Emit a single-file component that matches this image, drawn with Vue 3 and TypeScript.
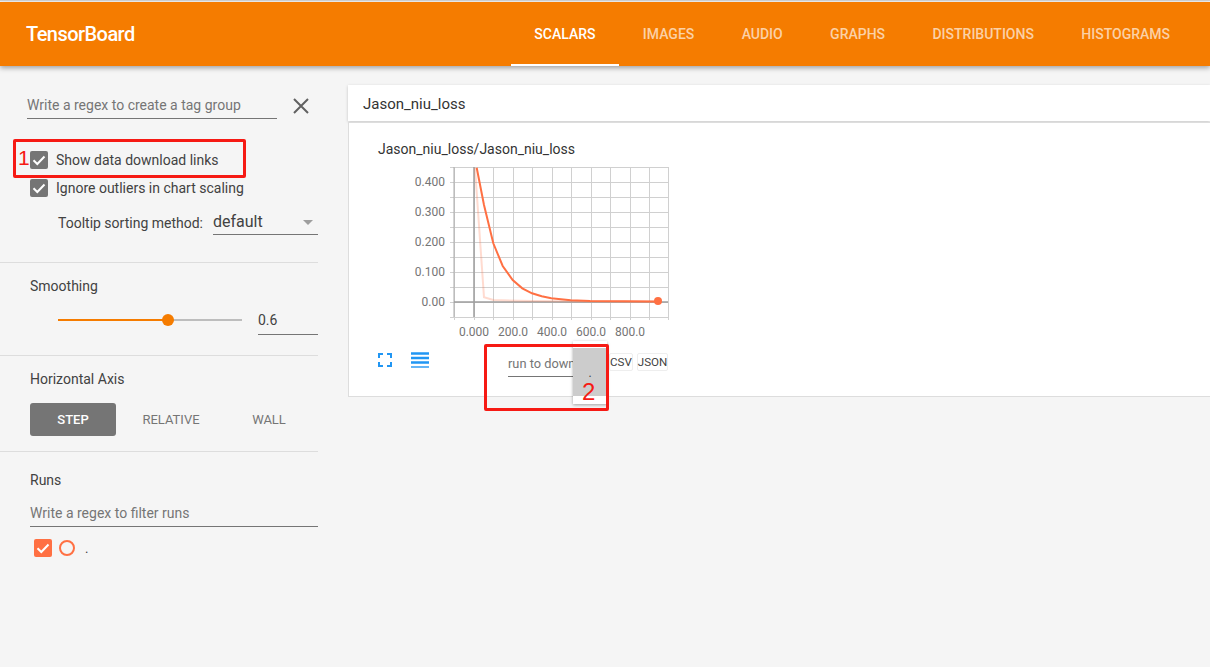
<script setup lang="ts">
const tabs = ['SCALARS', 'IMAGES', 'AUDIO', 'GRAPHS', 'DISTRIBUTIONS', 'HISTOGRAMS']
const vGrid = [454, 474, 493.5, 513, 532.5, 552, 571.5, 591, 610.5, 630, 649.5, 668]
const hGrid = [167, 182, 197, 212, 227, 242, 257, 272, 287, 302, 317]
const yLabels = [
  { t: '0.400', y: 182 },
  { t: '0.300', y: 212 },
  { t: '0.200', y: 242 },
  { t: '0.100', y: 272 },
  { t: '0.00', y: 302 },
]
const xLabels = [
  { t: '0.000', x: 474 },
  { t: '200.0', x: 513 },
  { t: '400.0', x: 552 },
  { t: '600.0', x: 591 },
  { t: '800.0', x: 630 },
]
</script>

<template>
  <div class="page">
    <header class="topbar">
      <div class="brand">TensorBoard</div>
      <nav class="tabs">
        <span v-for="(t, i) in tabs" :key="t" class="tab" :class="{ active: i === 0 }">{{ t }}</span>
      </nav>
    </header>

    <div class="body">
      <aside class="side">
        <section class="sec-top">
          <div class="group-row">
            <div class="regex">Write a regex to create a tag group</div>
            <svg class="close" viewBox="0 0 16 16" width="16" height="16"><path d="M1 1L15 15M15 1L1 15" stroke="#616161" stroke-width="2" fill="none" /></svg>
          </div>
          <label class="check first">
            <span class="box"><svg viewBox="0 0 18 18" width="18" height="18"><path d="M3.5 9.2L7.3 13L14.5 5.5" stroke="#fff" stroke-width="2" fill="none" /></svg></span>
            Show data download links
          </label>
          <label class="check second">
            <span class="box"><svg viewBox="0 0 18 18" width="18" height="18"><path d="M3.5 9.2L7.3 13L14.5 5.5" stroke="#fff" stroke-width="2" fill="none" /></svg></span>
            Ignore outliers in chart scaling
          </label>
          <div class="sort">
            <span class="sort-label">Tooltip sorting method:</span>
            <div class="select"><span>default</span><i class="caret"></i></div>
          </div>
        </section>

        <section class="sec smoothing">
          <div class="title">Smoothing</div>
          <div class="slider-row">
            <div class="track">
              <div class="fill" style="width: 60%"></div>
              <div class="thumb"></div>
            </div>
            <div class="value">0.6</div>
          </div>
        </section>

        <section class="sec axis">
          <div class="title">Horizontal Axis</div>
          <div class="btns">
            <span class="btn on">STEP</span>
            <span class="btn rel">RELATIVE</span>
            <span class="btn wall">WALL</span>
          </div>
        </section>

        <section class="sec runs">
          <div class="title">Runs</div>
          <div class="filter">Write a regex to filter runs</div>
          <div class="run">
            <span class="box orange"><svg viewBox="0 0 18 18" width="18" height="18"><path d="M3.5 9.2L7.3 13L14.5 5.5" stroke="#fff" stroke-width="2" fill="none" /></svg></span>
            <span class="radio"></span>
            <span class="dot">.</span>
          </div>
        </section>
      </aside>

      <main class="main">
        <div class="cat">Jason_niu_loss</div>
        <div class="card">
          <div class="card-title">Jason_niu_loss/Jason_niu_loss</div>
          <div class="chart">
            <svg viewBox="349 160 330 180" width="330" height="180">
              <g stroke="#d0d0d0" stroke-width="1" shape-rendering="crispEdges">
                <line v-for="x in vGrid" :key="x" :x1="x" :x2="x" y1="167" y2="320" />
                <line v-for="y in hGrid" :key="y" x1="450" x2="668" :y1="y" :y2="y" />
              </g>
              <line x1="454" x2="454" y1="167" y2="317" stroke="#aaa" />
              <line x1="474" x2="474" y1="167" y2="317" stroke="#9e9e9e" stroke-width="1.5" />
              <line x1="454" x2="668" y1="302" y2="302" stroke="#9e9e9e" stroke-width="1.5" />
              <path d="M475 167.7L484 297.3L493.3 300L532 301L658 301.7" fill="none" stroke="#ff7043" stroke-opacity="0.25" stroke-width="2" />
              <path d="M476.7 167.7L484 205L493.3 243.3L502.7 266L512.7 280L522.3 288.3L532 293.3L541.7 296.3L551.3 298.3L570.7 300.3L590 301L658 301.5" fill="none" stroke="#ff7043" stroke-width="2" />
              <circle cx="658" cy="301" r="4" fill="#ff7043" />
              <text v-for="l in yLabels" :key="l.t" x="445" :y="l.y + 4" text-anchor="end" class="tick">{{ l.t }}</text>
              <text v-for="l in xLabels" :key="l.t" :x="l.x" y="335.5" text-anchor="middle" class="tick">{{ l.t }}</text>
            </svg>
          </div>
          <div class="tools">
            <svg class="expand" viewBox="0 0 14 14" width="14" height="14"><path d="M1 5V1H5M9 1H13V5M13 9V13H9M5 13H1V9" fill="none" stroke="#2196f3" stroke-width="2" /></svg>
            <svg class="list" viewBox="0 0 18 16" width="18" height="16"><path d="M0 1.5H18M0 6H18M0 10.5H18" stroke="#2196f3" stroke-width="2.4" /><path d="M0 15H18" stroke="#2196f3" stroke-width="1.4" /></svg>
            <div class="download">
              <div class="run-input">run to download</div>
              <div class="menu"><div class="menu-item">.</div></div>
              <span class="fmt csv">CSV</span>
              <span class="fmt">JSON</span>
            </div>
          </div>
        </div>
      </main>
    </div>

    <div class="mark mark-one"></div>
    <div class="num num-one">1</div>
    <div class="mark mark-two"></div>
    <div class="num num-two">2</div>
  </div>
</template>

<style>
html, body { margin: 0; background: #f5f5f5; }
</style>

<style scoped>
.page {
  position: relative;
  width: 1210px;
  height: 667px;
  overflow: hidden;
  background: #f5f5f5;
  font-family: Roboto, "Liberation Sans", sans-serif;
  color: #424242;
  border-top: 1px solid #ccc;
  box-sizing: border-box;
}
.topbar {
  height: 64px;
  margin-top: 1px;
  background: #f57c00;
  display: flex;
  align-items: stretch;
  justify-content: space-between;
  box-shadow: 0 2px 5px rgba(0, 0, 0, 0.35);
  position: relative;
}
.brand {
  margin-left: 26px;
  align-self: center;
  margin-top: -1px;
  font-size: 20px;
  font-weight: 500;
  color: #fff;
  letter-spacing: -0.55px;
}
.tabs { display: flex; margin-right: 16.3px; }
.tab {
  padding: 2px 23.7px 0;
  display: flex;
  align-items: center;
  font-size: 14px;
  font-weight: 500;
  color: rgba(255, 255, 255, 0.66);
  border-bottom: 2px solid transparent;
  box-sizing: content-box;
  height: 60px;
}
.tab.active { color: #fff; border-bottom-color: #fff; }

.body { display: flex; }
.side { width: 318px; flex: none; font-size: 14px; }
.sec-top { height: 196px; padding: 0 0 0 27px; box-sizing: border-box; }
.group-row { display: flex; align-items: flex-end; padding-top: 28px; }
.regex {
  width: 250px;
  height: 24px;
  border-bottom: 1px solid #757575;
  color: #757575;
  font-size: 14px;
  line-height: 22px;
}
.close { margin: 0 0 5px 16px; }
.check { display: flex; align-items: center; margin-left: 3px; color: #424242; }
.check.first { margin-top: 27px; height: 28px; }
.check.second { height: 28px; }
.box {
  width: 18px;
  height: 18px;
  background: #757575;
  border-radius: 2px;
  margin-right: 8px;
  flex: none;
  display: block;
}
.box svg { display: block; }
.sort { display: flex; align-items: flex-end; margin-top: 4px; margin-left: 31px; height: 28px; }
.sort-label { font-size: 14px; line-height: 22px; width: 155px; flex: none; }
.select {
  flex: 1;
  height: 29px;
  margin-bottom: -1px;
  padding-top: 2px;
  border-bottom: 1px solid #757575;
  display: flex;
  justify-content: space-between;
  align-items: center;
  font-size: 16px;
  padding-right: 5px;
  box-sizing: border-box;
}
.caret {
  width: 0;
  height: 0;
  border-left: 5px solid transparent;
  border-right: 5px solid transparent;
  border-top: 5px solid #9e9e9e;
  margin-top: 2px;
}
.sec { border-top: 1px solid #ddd; padding-left: 30px; box-sizing: border-box; }
.title { font-size: 14px; line-height: 18px; color: #424242; }
.smoothing { height: 93px; padding-top: 14px; }
.slider-row { display: flex; align-items: center; margin-top: 12px; padding-left: 28px; }
.track { position: relative; width: 184px; height: 2px; background: #bdbdbd; margin-top: -2px; }
.fill { height: 2px; background: #f57c00; }
.thumb {
  position: absolute;
  left: 104px;
  top: -5px;
  width: 12px;
  height: 12px;
  border-radius: 50%;
  background: #f57c00;
}
.value {
  margin-left: 16px;
  flex: 1;
  height: 27px;
  line-height: 26px;
  border-bottom: 1px solid #757575;
  font-size: 14px;
}
.axis { height: 96px; padding-top: 14px; }
.btns { display: flex; margin-top: 15px; font-size: 13px; font-weight: 500; }
.btn {
  height: 33px;
  line-height: 33px;
  text-align: center;
  color: #757575;
  font-weight: 400;
}
.btn.on { width: 86px; background: #757575; color: #fff; border-radius: 3px; font-weight: 500; }
.btn.rel { width: 110px; }
.btn.wall { width: 86px; }
.runs { padding-top: 19px; }
.filter {
  margin-top: 9px;
  height: 28px;
  line-height: 30px;
  border-bottom: 1px solid #757575;
  color: #757575;
  font-size: 14px;
}
.run { display: flex; align-items: center; margin-top: 12px; padding-left: 4px; }
.box.orange { background: #ff7043; margin-right: 7px; }
.radio {
  width: 12px;
  height: 12px;
  border: 2px solid #ff7043;
  border-radius: 50%;
  margin-right: 10px;
}
.dot { font-size: 13px; }

.main { flex: 1; padding: 19px 0 0 30px; min-width: 0; }
.cat {
  height: 36px;
  line-height: 38px;
  background: #fff;
  padding-left: 15px;
  font-size: 15px;
  color: #333;
  box-shadow: 0 1px 3px rgba(0, 0, 0, 0.2);
}
.card {
  height: 275px;
  background: #fff;
  border: 1px solid #ddd;
  border-right: 0;
  box-sizing: border-box;
  margin-top: 1px;
  position: relative;
}
.card-title { padding: 17px 0 0 29px; font-size: 14px; line-height: 18px; color: #333; }
.chart { height: 180px; margin-top: 2px; }
.chart svg { display: block; }
.tick { font-size: 12px; fill: #757575; font-family: Roboto, "Liberation Sans", sans-serif; }
.tools { position: relative; display: flex; align-items: flex-start; padding: 12px 0 0 29px; }
.expand { margin-top: 1px; }
.list { margin: 0 0 0 19px; }
.download {
  display: flex;
  align-items: flex-start;
  margin-left: 79px;
  margin-top: -4px;
}
.run-input {
  width: 65px;
  height: 28px;
  line-height: 32px;
  border-bottom: 1px solid #757575;
  color: #757575;
  font-size: 12.8px;
  white-space: nowrap;
  flex: none;
}
.menu {
  position: relative;
  width: 34px;
  height: 63px;
  margin-top: -7px;
  background: #fff;
  padding-top: 7px;
  box-sizing: border-box;
  flex: none;
  box-shadow: 0 1px 3px rgba(0, 0, 0, 0.35);
}
.menu-item {
  height: 48px;
  background: #ccc;
  text-align: center;
  line-height: 50px;
  font-size: 12px;
}
.fmt {
  height: 16px;
  line-height: 16px;
  font-size: 11.6px;
  color: #424242;
  border: 1px solid #eee;
  border-radius: 2px;
  margin-top: 5px;
}
.fmt.csv { margin-right: 4px; margin-left: 2px; }

.mark { position: absolute; border: 3px solid #f61a14; border-radius: 2px; box-sizing: border-box; }
.mark-one { left: 13px; top: 138px; width: 233px; height: 39px; }
.mark-two { left: 484px; top: 343px; width: 125px; height: 67px; }
.num { position: absolute; color: #f61a14; font-family: "Liberation Sans", sans-serif; line-height: 24px; }
.num-one { left: 18px; top: 145px; font-size: 21px; }
.num-two { left: 582px; top: 379px; font-size: 24px; }
</style>
